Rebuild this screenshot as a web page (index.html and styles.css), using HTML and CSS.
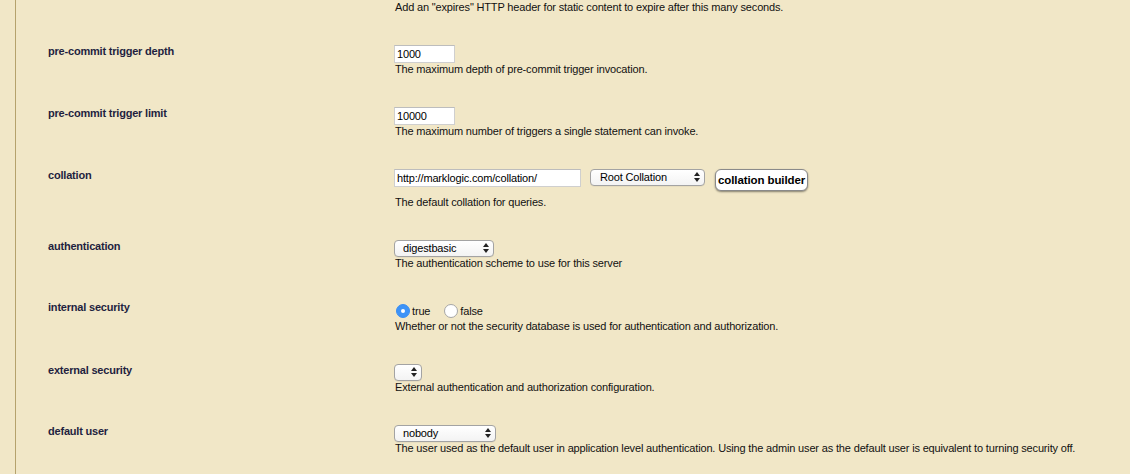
FILE: index.html
```html
<!DOCTYPE html>
<html>
<head>
<meta charset="utf-8">
<title>Server configuration</title>
<link rel="stylesheet" href="styles.css">
</head>
<body>
<div class="panel">
  <div class="row row-top">
    <div class="label"></div>
    <div class="value">
      <div class="desc">Add an "expires" HTTP header for static content to expire after this many seconds.</div>
    </div>
  </div>

  <div class="row">
    <div class="label">pre-commit trigger depth</div>
    <div class="value">
      <div class="controls h18"><input class="text short" type="text" value="1000"></div>
      <div class="desc">The maximum depth of pre-commit trigger invocation.</div>
    </div>
  </div>

  <div class="row">
    <div class="label">pre-commit trigger limit</div>
    <div class="value">
      <div class="controls h18"><input class="text short" type="text" value="10000"></div>
      <div class="desc">The maximum number of triggers a single statement can invoke.</div>
    </div>
  </div>

  <div class="row">
    <div class="label">collation</div>
    <div class="value">
      <div class="controls h27">
        <input class="text long" type="text" value="http://marklogic.com/collation/">
        <span class="select w-root">
          <select><option>Root Collation</option></select>
          <svg class="arrows" width="6" height="10" viewBox="0 0 6 10"><path d="M0 4 L3 0 L6 4 Z M0 6 L3 10 L6 6 Z" fill="#222"/></svg>
        </span>
        <button class="btn" type="button">collation builder</button>
      </div>
      <div class="desc">The default collation for queries.</div>
    </div>
  </div>

  <div class="row">
    <div class="label">authentication</div>
    <div class="value">
      <div class="controls h17">
        <span class="select w-auth">
          <select><option>digestbasic</option></select>
          <svg class="arrows" width="6" height="10" viewBox="0 0 6 10"><path d="M0 4 L3 0 L6 4 Z M0 6 L3 10 L6 6 Z" fill="#222"/></svg>
        </span>
      </div>
      <div class="desc">The authentication scheme to use for this server</div>
    </div>
  </div>

  <div class="row">
    <div class="label">internal security</div>
    <div class="value">
      <div class="controls h19 radios">
        <label class="radio"><input type="radio" name="isec" checked><span>true</span></label>
        <label class="radio"><input type="radio" name="isec"><span>false</span></label>
      </div>
      <div class="desc">Whether or not the security database is used for authentication and authorization.</div>
    </div>
  </div>

  <div class="row">
    <div class="label">external security</div>
    <div class="value">
      <div class="controls h17">
        <span class="select w-ext">
          <select><option></option></select>
          <svg class="arrows" width="6" height="10" viewBox="0 0 6 10"><path d="M0 4 L3 0 L6 4 Z M0 6 L3 10 L6 6 Z" fill="#222"/></svg>
        </span>
      </div>
      <div class="desc">External authentication and authorization configuration.</div>
    </div>
  </div>

  <div class="row">
    <div class="label">default user</div>
    <div class="value">
      <div class="controls h17">
        <span class="select w-user">
          <select><option>nobody</option></select>
          <svg class="arrows" width="6" height="10" viewBox="0 0 6 10"><path d="M0 4 L3 0 L6 4 Z M0 6 L3 10 L6 6 Z" fill="#222"/></svg>
        </span>
      </div>
      <div class="desc">The user used as the default user in application level authentication. Using the admin user as the default user is equivalent to turning security off.</div>
    </div>
  </div>
</div>
</body>
</html>
```

FILE: styles.css
```css
html, body {
  margin: 0;
  padding: 0;
  background: #f1e7c7;
  height: 100%;
}

body {
  font-family: "Liberation Sans", Arial, sans-serif;
  font-size: 11px;
  color: #111;
  letter-spacing: -0.16px;
  overflow: hidden;
}

.panel {
  margin-left: 15px;
  border-left: 1px solid #b5a26c;
  padding-left: 32px;
  min-height: 100%;
  box-sizing: border-box;
}

.row {
  display: grid;
  grid-template-columns: 347px 1fr;
  padding-bottom: 31px;
}

.row-top {
  padding-top: 1px;
}

.label {
  font-weight: bold;
  font-size: 11px;
  line-height: 13px;
  letter-spacing: -0.2px;
  color: #1f1f3f;
}

.value {
  display: flex;
  flex-direction: column;
}

.desc {
  line-height: 13px;
  white-space: nowrap;
}

.controls {
  display: flex;
  align-items: flex-start;
}

.h17 { height: 17px; }
.h18 { height: 18px; }
.h19 { height: 19px; }
.h27 { height: 27px; }

.text {
  box-sizing: border-box;
  height: 18px;
  margin: 0 0 0 -1px;
  padding: 0 2px;
  border: 1px solid #cfcfcf;
  border-top-color: #bdbdbd;
  background: #fff;
  font-family: "Liberation Sans", Arial, sans-serif;
  font-size: 11px;
  letter-spacing: -0.16px;
  color: #000;
  outline: none;
}

.short { width: 61px; }
.long { width: 187px; padding-left: 2px; }

.select {
  position: relative;
  display: inline-block;
  height: 17px;
}

.select select {
  -webkit-appearance: none;
  appearance: none;
  box-sizing: border-box;
  width: 100%;
  height: 17px;
  margin: 0;
  padding: 0 0 0 8px;
  border: 1px solid #a3a3a3;
  border-radius: 4px;
  background: linear-gradient(#ffffff, #f3f3f3);
  font-family: "Liberation Sans", Arial, sans-serif;
  font-size: 11px;
  letter-spacing: -0.16px;
  line-height: 15px;
  color: #000;
  outline: none;
  box-shadow: 0 0.5px 0 rgba(0,0,0,0.08);
}

.select .arrows {
  position: absolute;
  right: 5px;
  top: 3px;
  pointer-events: none;
}

.w-root { width: 115px; margin-left: 9px; }
.w-auth { width: 100px; margin-left: -1px; }
.w-ext { width: 28px; margin-left: -1px; }
.w-user { width: 102px; margin-left: -1px; }

.w-root select { padding-left: 9px; }

.btn {
  box-sizing: border-box;
  height: 22px;
  margin: 0 0 0 10px;
  padding: 0 2px;
  border: 1px solid #8a8a8a;
  border-radius: 6px;
  background: #fff;
  font-family: "Liberation Sans", Arial, sans-serif;
  font-size: 11.5px;
  font-weight: bold;
  letter-spacing: -0.1px;
  color: #000;
  box-shadow: 0 1px 2px rgba(0,0,0,0.45);
}

.radios {
  align-items: center;
  padding-top: 1px;
  box-sizing: border-box;
}

.radio {
  display: inline-flex;
  align-items: center;
  margin-right: 13px;
}

.radio input {
  -webkit-appearance: none;
  appearance: none;
  box-sizing: border-box;
  width: 14px;
  height: 14px;
  margin: 0 2px 0 1px;
  border: 1px solid #a6a6a6;
  border-radius: 50%;
  background: #fff;
  position: relative;
}

.radio input:checked {
  border-color: #3a8ef2;
  background: #3d93f7;
}

.radio input:checked::after {
  content: "";
  position: absolute;
  left: 4px;
  top: 4px;
  width: 4px;
  height: 4px;
  border-radius: 50%;
  background: #fff;
}

.radio span {
  line-height: 13px;
}
```
